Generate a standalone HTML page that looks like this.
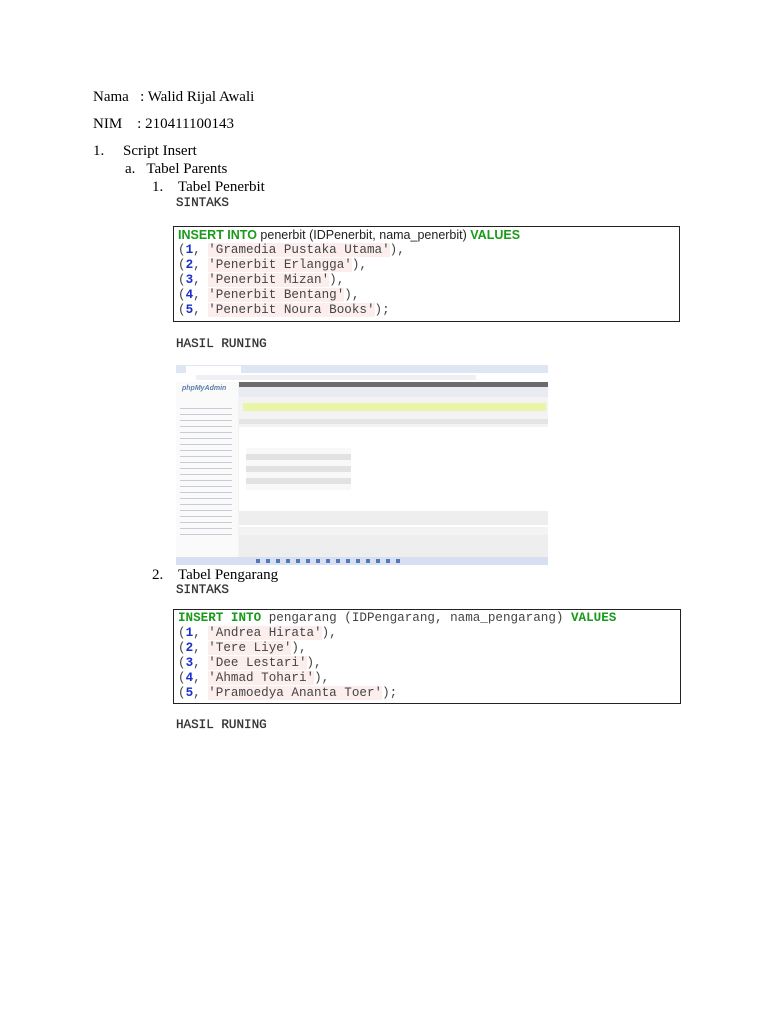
<!DOCTYPE html>
<html><head><style>
body{margin:0;width:768px;height:1024px;background:#fff;position:relative;font-family:"Liberation Serif",serif;color:#000;overflow:hidden}
.t{position:absolute;font-size:15px;line-height:18px;white-space:pre}
.m{position:absolute;font-family:"Liberation Mono",monospace;font-size:12.6px;line-height:14px;color:#333;white-space:pre;-webkit-text-stroke:0.3px #333}
.box{position:absolute;border:1.5px solid #222;background:#fff}
.c{position:absolute;left:4px;font-family:"Liberation Mono",monospace;font-size:12.6px;line-height:15px;white-space:pre;color:#444}
.k{color:#1a9a1a;font-weight:bold}
.n{color:#1a2fd0;font-weight:bold}
.s{background:#fdeeee;color:#444}
.sans{font-family:"Liberation Sans",sans-serif;font-size:12.5px;color:#222}
</style></head><body>
<div class="t" style="left:93px;top:88px">Nama   : Walid Rijal Awali</div>
<div class="t" style="left:93px;top:115px">NIM    : 210411100143</div>
<div class="t" style="left:93px;top:142px">1.     Script Insert</div>
<div class="t" style="left:125px;top:160px">a.   Tabel Parents</div>
<div class="t" style="left:152px;top:178px">1.    Tabel Penerbit</div>
<div class="m" style="left:176px;top:196px">SINTAKS</div>

<div class="box" style="left:173px;top:226px;width:505px;height:94px">
<div class="c" style="top:1px"><span class="sans"><b style="color:#1a9a1a">INSERT INTO</b> penerbit (IDPenerbit, nama_penerbit) <b style="color:#1a9a1a">VALUES</b></span></div>
<div class="c" style="top:16px">(<span class="n">1</span>, <span class="s">'Gramedia Pustaka Utama'</span>),</div>
<div class="c" style="top:31px">(<span class="n">2</span>, <span class="s">'Penerbit Erlangga'</span>),</div>
<div class="c" style="top:46px">(<span class="n">3</span>, <span class="s">'Penerbit Mizan'</span>),</div>
<div class="c" style="top:61px">(<span class="n">4</span>, <span class="s">'Penerbit Bentang'</span>),</div>
<div class="c" style="top:76px">(<span class="n">5</span>, <span class="s">'Penerbit Noura Books'</span>);</div>
</div>

<div class="m" style="left:176px;top:337px">HASIL RUNING</div>

<div style="position:absolute;left:176px;top:365px;width:372px;height:200px;background:#f3f3f3;overflow:hidden">
 <div style="position:absolute;left:0;top:0;width:372px;height:8px;background:#dfe6f3"></div>
 <div style="position:absolute;left:10px;top:1px;width:55px;height:7px;background:#fff"></div>
 <div style="position:absolute;left:0;top:8px;width:372px;height:9px;background:#fff"></div>
 <div style="position:absolute;left:20px;top:10px;width:280px;height:5px;background:#eef0f4"></div>
 <div style="position:absolute;left:0;top:17px;width:62px;height:175px;background:#fafafa"></div>
 <div style="position:absolute;left:6px;top:20px;width:42px;height:7px;color:#5b7fa8;font:italic bold 7px 'Liberation Sans',sans-serif">phpMyAdmin</div>
 <div style="position:absolute;left:4px;top:40px;width:52px;height:130px;background:repeating-linear-gradient(#fafafa 0 3px,#c6cbd6 3px 4px,#fafafa 4px 6px)"></div>
 <div style="position:absolute;left:63px;top:17px;width:309px;height:5px;background:#6b6b6b"></div>
 <div style="position:absolute;left:63px;top:22px;width:309px;height:10px;background:#e8ecf2"></div>
 <div style="position:absolute;left:67px;top:38px;width:303px;height:8px;background:#ebf5a8"></div>
 <div style="position:absolute;left:63px;top:54px;width:309px;height:5px;background:#e4e4e4"></div>
 <div style="position:absolute;left:63px;top:62px;width:309px;height:100px;background:#fff"></div>
 <div style="position:absolute;left:70px;top:83px;width:105px;height:42px;background:repeating-linear-gradient(#f8f8f8 0 6px,#e2e2e2 6px 12px)"></div>
 <div style="position:absolute;left:63px;top:146px;width:309px;height:14px;background:#eee"></div>
 <div style="position:absolute;left:63px;top:170px;width:309px;height:22px;background:#eeeeee"></div>
 <div style="position:absolute;left:0;top:192px;width:372px;height:8px;background:#d6e0f0"></div>
 <div style="position:absolute;left:80px;top:194px;width:150px;height:4px;background:repeating-linear-gradient(90deg,#5577bb 0 4px,transparent 4px 10px)"></div>
</div>

<div class="t" style="left:152px;top:566px">2.    Tabel Pengarang</div>
<div class="m" style="left:176px;top:583px">SINTAKS</div>

<div class="box" style="left:173px;top:609px;width:506px;height:93px">
<div class="c" style="top:1px"><span class="k">INSERT INTO</span> pengarang (IDPengarang, nama_pengarang) <span class="k">VALUES</span></div>
<div class="c" style="top:16px">(<span class="n">1</span>, <span class="s">'Andrea Hirata'</span>),</div>
<div class="c" style="top:31px">(<span class="n">2</span>, <span class="s">'Tere Liye'</span>),</div>
<div class="c" style="top:46px">(<span class="n">3</span>, <span class="s">'Dee Lestari'</span>),</div>
<div class="c" style="top:61px">(<span class="n">4</span>, <span class="s">'Ahmad Tohari'</span>),</div>
<div class="c" style="top:76px">(<span class="n">5</span>, <span class="s">'Pramoedya Ananta Toer'</span>);</div>
</div>

<div class="m" style="left:176px;top:718px">HASIL RUNING</div>
</body></html>
